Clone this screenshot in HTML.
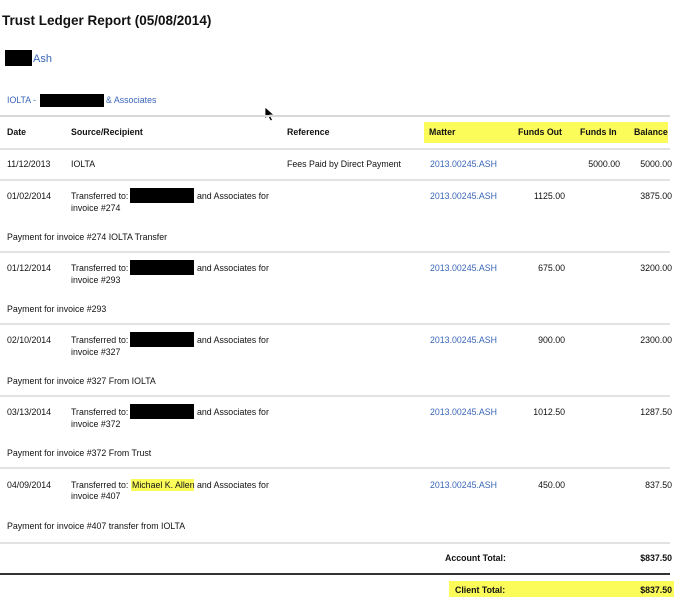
<!DOCTYPE html>
<html><head><meta charset="utf-8"><style>
body{margin:0;width:691px;height:609px;background:#fff;position:relative;overflow:hidden;font-family:"Liberation Sans",Arial,sans-serif;color:#111;}
.t{position:absolute;font-size:8.8px;white-space:nowrap;line-height:11px;}
.b{font-weight:bold;}
.bl{color:#3a66b8;}
.r{text-align:right;}
.ln{position:absolute;left:0;width:670px;height:2px;background:#e2e2e2;}
.bx{position:absolute;background:#000;}
.hl{position:absolute;background:#fbfb5a;}
</style></head><body>
<div class="t b" style="left:2px;top:12px;font-size:13.5px;line-height:18px;">Trust Ledger Report (05/08/2014)</div>
<div class="bx" style="left:5px;top:50px;width:27px;height:16px;"></div>
<div class="t bl" style="left:33px;top:52px;font-size:11px;line-height:14px;">Ash</div>
<div class="t bl" style="left:7px;top:95px;">IOLTA -</div>
<div class="bx" style="left:40px;top:94px;width:64px;height:13px;"></div>
<div class="t bl" style="left:106px;top:95px;">&amp; Associates</div>
<svg style="position:absolute;left:264px;top:106px" width="12" height="16" viewBox="0 0 12 16"><path d="M1 1 L1 13 L4 10 L6.5 15 L8.5 14 L6 9 L10 9 Z" fill="#000" stroke="#fff" stroke-width="0.8"/></svg>
<div class="ln" style="top:115px;background:#d8d8d8;"></div>
<div class="hl" style="left:424px;top:122px;width:244px;height:21px;"></div>
<div class="t b" style="left:7px;top:127px;">Date</div>
<div class="t b" style="left:71px;top:127px;">Source/Recipient</div>
<div class="t b" style="left:287px;top:127px;">Reference</div>
<div class="t b" style="left:429px;top:127px;">Matter</div>
<div class="t b" style="left:518px;top:127px;">Funds Out</div>
<div class="t b" style="left:580px;top:127px;">Funds In</div>
<div class="t b" style="left:634px;top:127px;">Balance</div>
<div class="ln" style="top:148px;"></div>

<div class="t" style="left:7px;top:159px;">11/12/2013</div>
<div class="t" style="left:71px;top:159px;">IOLTA</div>
<div class="t" style="left:287px;top:159px;">Fees Paid by Direct Payment</div>
<div class="t bl" style="left:430px;top:159px;">2013.00245.ASH</div>
<div class="t r" style="right:71px;top:159px;">5000.00</div>
<div class="t r" style="right:19px;top:159px;">5000.00</div>
<div class="ln" style="top:179px;"></div>

<div class="t" style="left:7px;top:191px;">01/02/2014</div>
<div class="t" style="left:71px;top:191px;">Transferred to:</div>
<div class="bx" style="left:130px;top:188px;width:64px;height:15px;"></div>
<div class="t" style="left:197px;top:191px;">and Associates for</div>
<div class="t" style="left:71px;top:203px;">invoice #274</div>
<div class="t bl" style="left:430px;top:191px;">2013.00245.ASH</div>
<div class="t r" style="right:126px;top:191px;">1125.00</div>
<div class="t r" style="right:19px;top:191px;">3875.00</div>
<div class="t" style="left:7px;top:232px;">Payment for invoice #274 IOLTA Transfer</div>
<div class="ln" style="top:251px;"></div>

<div class="t" style="left:7px;top:263px;">01/12/2014</div>
<div class="t" style="left:71px;top:263px;">Transferred to:</div>
<div class="bx" style="left:130px;top:260px;width:64px;height:15px;"></div>
<div class="t" style="left:197px;top:263px;">and Associates for</div>
<div class="t" style="left:71px;top:275px;">invoice #293</div>
<div class="t bl" style="left:430px;top:263px;">2013.00245.ASH</div>
<div class="t r" style="right:126px;top:263px;">675.00</div>
<div class="t r" style="right:19px;top:263px;">3200.00</div>
<div class="t" style="left:7px;top:304px;">Payment for invoice #293</div>
<div class="ln" style="top:323px;"></div>

<div class="t" style="left:7px;top:335px;">02/10/2014</div>
<div class="t" style="left:71px;top:335px;">Transferred to:</div>
<div class="bx" style="left:130px;top:332px;width:64px;height:15px;"></div>
<div class="t" style="left:197px;top:335px;">and Associates for</div>
<div class="t" style="left:71px;top:347px;">invoice #327</div>
<div class="t bl" style="left:430px;top:335px;">2013.00245.ASH</div>
<div class="t r" style="right:126px;top:335px;">900.00</div>
<div class="t r" style="right:19px;top:335px;">2300.00</div>
<div class="t" style="left:7px;top:376px;">Payment for invoice #327 From IOLTA</div>
<div class="ln" style="top:395px;"></div>

<div class="t" style="left:7px;top:407px;">03/13/2014</div>
<div class="t" style="left:71px;top:407px;">Transferred to:</div>
<div class="bx" style="left:130px;top:404px;width:64px;height:15px;"></div>
<div class="t" style="left:197px;top:407px;">and Associates for</div>
<div class="t" style="left:71px;top:419px;">invoice #372</div>
<div class="t bl" style="left:430px;top:407px;">2013.00245.ASH</div>
<div class="t r" style="right:126px;top:407px;">1012.50</div>
<div class="t r" style="right:19px;top:407px;">1287.50</div>
<div class="t" style="left:7px;top:448px;">Payment for invoice #372 From Trust</div>
<div class="ln" style="top:467px;"></div>

<div class="t" style="left:7px;top:480px;">04/09/2014</div>
<div class="t" style="left:71px;top:480px;">Transferred to:</div>
<div class="hl" style="left:131px;top:479px;width:63px;height:12px;"></div>
<div class="t" style="left:132px;top:480px;">Michael K. Allen</div>
<div class="t" style="left:197px;top:480px;">and Associates for</div>
<div class="t" style="left:71px;top:491px;">invoice #407</div>
<div class="t bl" style="left:430px;top:480px;">2013.00245.ASH</div>
<div class="t r" style="right:126px;top:480px;">450.00</div>
<div class="t r" style="right:19px;top:480px;">837.50</div>
<div class="t" style="left:7px;top:521px;">Payment for invoice #407 transfer from IOLTA</div>
<div class="ln" style="top:542px;"></div>

<div class="t b" style="left:445px;top:553px;">Account Total:</div>
<div class="t b r" style="right:19px;top:553px;">$837.50</div>
<div class="ln" style="top:573px;background:#333;"></div>
<div class="hl" style="left:449px;top:581px;width:225px;height:16px;"></div>
<div class="t b" style="left:455px;top:585px;">Client Total:</div>
<div class="t b r" style="right:19px;top:585px;">$837.50</div>
</body></html>
